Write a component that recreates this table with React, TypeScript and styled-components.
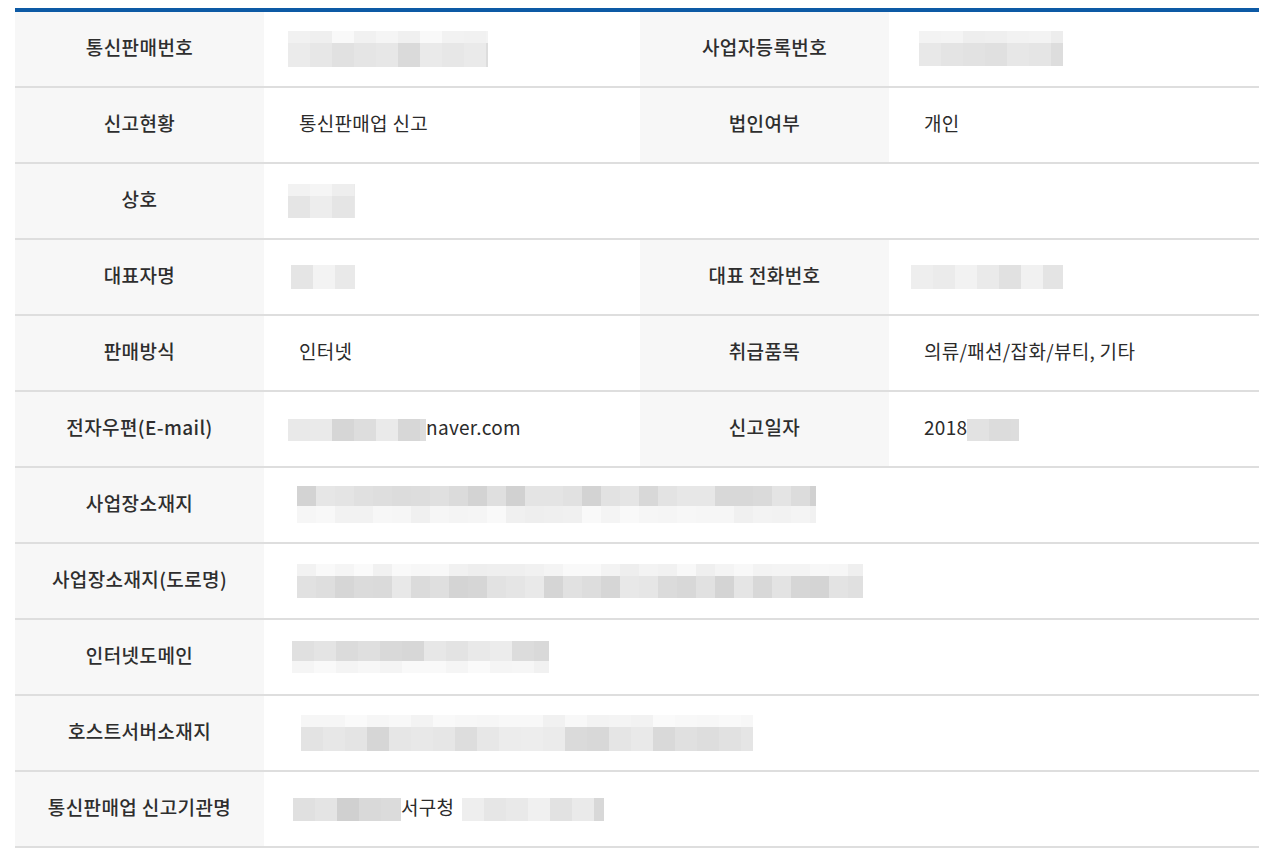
import React from "react";
import styled, { createGlobalStyle } from "styled-components";

const Global = createGlobalStyle`
  html, body { margin: 0; padding: 0; background: #fff; }
  body { font-family: "Noto Sans CJK KR", "Noto Sans", sans-serif; }
`;

const Page = styled.div`
  padding: 8px 21px 0 15px;
`;

const Table = styled.div`
  width: 1244px;
  border-top: 4px solid #0d5aa5;
  box-shadow: inset 0 1px 0 #2b74c0;
  display: grid;
  grid-template-columns: 249px 376px 249px 370px;
`;

const Head = styled.div`
  height: 76px;
  box-sizing: border-box;
  padding-bottom: 5px;
  border-bottom: 2px solid #dedede;
  background: #f7f7f7;
  display: flex;
  align-items: center;
  justify-content: center;
  font-size: 19px;
  font-weight: 500;
  color: #2e2e2e;
  letter-spacing: 0.4px;
`;

const Cell = styled.div<{ $span?: boolean }>`
  height: 76px;
  box-sizing: border-box;
  padding-bottom: 5px;
  border-bottom: 2px solid #dedede;
  background: #fff;
  display: flex;
  align-items: center;
  padding-left: ${(p) => (p.$span ? "24px" : "35px")};
  font-size: 19px;
  color: #2b2b2b;
  grid-column: ${(p) => (p.$span ? "span 3" : "auto")};
  letter-spacing: 0.3px;
`;

const Inline = styled.div`
  display: flex;
  align-items: center;
`;

const MosaicBox = styled.div<{ $dx: number; $dy: number }>`
  display: flex;
  flex-direction: column;
  margin-left: ${(p) => p.$dx}px;
  transform: translateY(${(p) => p.$dy}px);
`;

const MosaicRow = styled.div`
  display: flex;
`;

const Tile = styled.div`
  flex: 0 0 auto;
`;

function rng(seed: number) {
  let s = seed;
  return () => {
    s = (s * 9301 + 49297) % 233280;
    return s / 233280;
  };
}

type MosaicProps = {
  width: number;
  rows: number[];
  tones: [number, number][];
  seed: number;
  dx?: number;
  dy?: number;
  cell?: number;
};

function Mosaic({ width, rows, tones, seed, dx = 0, dy = 0, cell = 22 }: MosaicProps) {
  const r = rng(seed);
  const cols = Math.ceil(width / cell);
  return (
    <MosaicBox $dx={dx} $dy={dy}>
      {rows.map((h, ri) => (
        <MosaicRow key={ri}>
          {Array.from({ length: cols }).map((_, ci) => {
            const [lo, hi] = tones[ri];
            const v = Math.round(lo + (hi - lo) * r());
            const w = ci === cols - 1 ? width - cell * (cols - 1) : cell;
            return (
              <Tile
                key={ci}
                style={{ width: w, height: h, background: `rgb(${v},${v},${v})` }}
              />
            );
          })}
        </MosaicRow>
      ))}
    </MosaicBox>
  );
}

export default function App() {
  return (
    <>
      <Global />
      <Page>
        <Table>
          <Head>통신판매번호</Head>
          <Cell style={{ paddingLeft: 24 }}>
            <Mosaic width={200} rows={[12, 24]} tones={[[236, 250], [218, 236]]} seed={3} dy={2} />
          </Cell>
          <Head>사업자등록번호</Head>
          <Cell style={{ paddingLeft: 30 }}>
            <Mosaic width={144} rows={[12, 23]} tones={[[236, 250], [220, 234]]} seed={7} dy={2} />
          </Cell>

          <Head>신고현황</Head>
          <Cell>통신판매업 신고</Cell>
          <Head>법인여부</Head>
          <Cell>개인</Cell>

          <Head>상호</Head>
          <Cell $span>
            <Mosaic width={67} rows={[12, 22]} tones={[[234, 246], [226, 240]]} seed={11} dy={2} />
          </Cell>

          <Head>대표자명</Head>
          <Cell style={{ paddingLeft: 27 }}>
            <Mosaic width={64} rows={[24]} tones={[[218, 246]]} seed={5} dy={2} />
          </Cell>
          <Head>대표 전화번호</Head>
          <Cell style={{ paddingLeft: 22 }}>
            <Mosaic width={152} rows={[24]} tones={[[222, 244]]} seed={13} dy={2} />
          </Cell>

          <Head>판매방식</Head>
          <Cell>인터넷</Cell>
          <Head>취급품목</Head>
          <Cell>의류/패션/잡화/뷰티, 기타</Cell>

          <Head>전자우편(E-mail)</Head>
          <Cell style={{ paddingLeft: 24 }}>
            <Inline>
              <Mosaic width={138} rows={[22]} tones={[[212, 236]]} seed={17} dy={3} />
              <span>naver.com</span>
            </Inline>
          </Cell>
          <Head>신고일자</Head>
          <Cell>
            <Inline>
              <span>2018</span>
              <Mosaic width={52} rows={[22]} tones={[[212, 226]]} seed={19} dy={3} />
            </Inline>
          </Cell>

          <Head>사업장소재지</Head>
          <Cell $span>
            <Mosaic width={519} rows={[20, 17]} tones={[[208, 232], [238, 250]]} seed={23} dx={9} dy={2} cell={19} />
          </Cell>

          <Head>사업장소재지(도로명)</Head>
          <Cell $span>
            <Mosaic width={566} rows={[12, 22]} tones={[[238, 250], [212, 234]]} seed={29} dx={9} dy={2} cell={19} />
          </Cell>

          <Head>인터넷도메인</Head>
          <Cell $span>
            <Mosaic width={257} rows={[20, 12]} tones={[[214, 236], [240, 252]]} seed={31} dx={4} dy={2} />
          </Cell>

          <Head>호스트서버소재지</Head>
          <Cell $span>
            <Mosaic width={452} rows={[12, 24]} tones={[[238, 250], [214, 238]]} seed={37} dx={13} dy={2} />
          </Cell>

          <Head>통신판매업 신고기관명</Head>
          <Cell $span>
            <Inline>
              <Mosaic width={108} rows={[23]} tones={[[204, 228]]} seed={41} dx={5} dy={3} />
              <span style={{ marginRight: 8 }}>서구청</span>
              <Mosaic width={142} rows={[23]} tones={[[212, 240]]} seed={43} dy={3} />
            </Inline>
          </Cell>
        </Table>
      </Page>
    </>
  );
}
